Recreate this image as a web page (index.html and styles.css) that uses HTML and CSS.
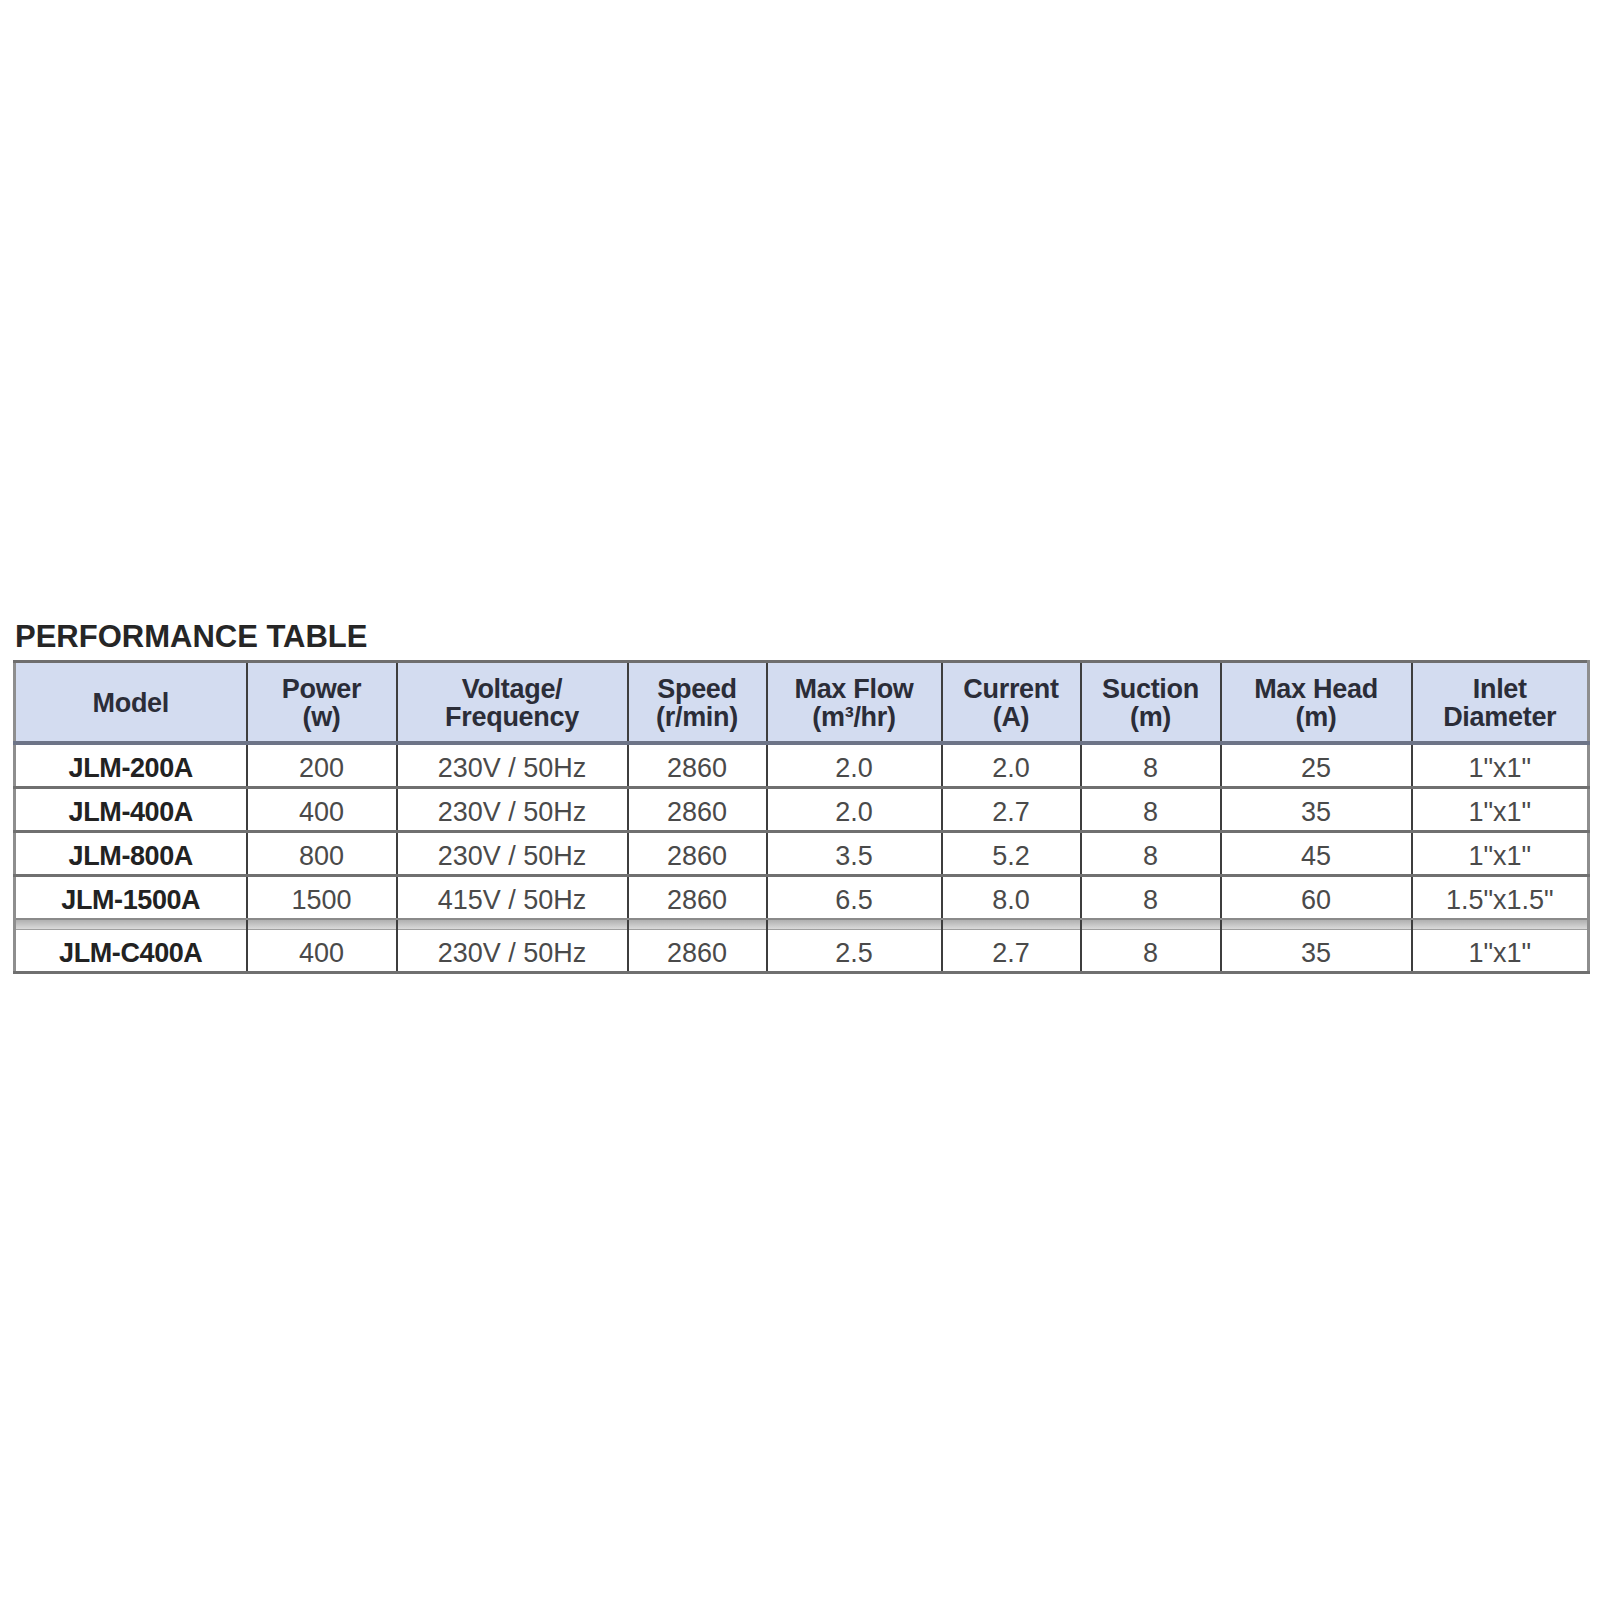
FILE: index.html
```html
<!DOCTYPE html>
<html lang="en">
<head>
<meta charset="utf-8">
<title>Performance Table</title>
<link rel="stylesheet" href="styles.css">
</head>
<body>
<main class="page">
  <h2 class="title">PERFORMANCE TABLE</h2>
  <table class="perf">
    <colgroup>
      <col class="c-model"><col class="c-power"><col class="c-volt"><col class="c-speed"><col class="c-flow"><col class="c-current"><col class="c-suction"><col class="c-head"><col class="c-inlet">
    </colgroup>
    <thead>
      <tr>
        <th>Model</th>
        <th>Power<br>(w)</th>
        <th>Voltage/<br>Frequency</th>
        <th>Speed<br>(r/min)</th>
        <th>Max Flow<br>(m³/hr)</th>
        <th>Current<br>(A)</th>
        <th>Suction<br>(m)</th>
        <th>Max Head<br>(m)</th>
        <th>Inlet<br>Diameter</th>
      </tr>
    </thead>
    <tbody>
      <tr>
        <td class="model">JLM-200A</td><td>200</td><td>230V / 50Hz</td><td>2860</td><td>2.0</td><td>2.0</td><td>8</td><td>25</td><td>1"x1"</td>
      </tr>
      <tr>
        <td class="model">JLM-400A</td><td>400</td><td>230V / 50Hz</td><td>2860</td><td>2.0</td><td>2.7</td><td>8</td><td>35</td><td>1"x1"</td>
      </tr>
      <tr>
        <td class="model">JLM-800A</td><td>800</td><td>230V / 50Hz</td><td>2860</td><td>3.5</td><td>5.2</td><td>8</td><td>45</td><td>1"x1"</td>
      </tr>
      <tr class="before-gap">
        <td class="model">JLM-1500A</td><td>1500</td><td>415V / 50Hz</td><td>2860</td><td>6.5</td><td>8.0</td><td>8</td><td>60</td><td>1.5"x1.5"</td>
      </tr>
      <tr class="gap">
        <td></td><td></td><td></td><td></td><td></td><td></td><td></td><td></td><td></td>
      </tr>
      <tr class="last">
        <td class="model">JLM-C400A</td><td>400</td><td>230V / 50Hz</td><td>2860</td><td>2.5</td><td>2.7</td><td>8</td><td>35</td><td>1"x1"</td>
      </tr>
    </tbody>
  </table>
</main>
</body>
</html>
```

FILE: styles.css
```css
html, body {
  margin: 0;
  padding: 0;
  background: #ffffff;
}

body {
  font-family: "Liberation Sans", Arial, sans-serif;
  color: #333333;
}

.page {
  padding: 622px 0 0 13px;
}

.title {
  margin: 0 0 8px 2px;
  font-size: 31px;
  line-height: 30px;
  font-weight: bold;
  color: #262626;
}

.perf {
  border-collapse: collapse;
  table-layout: fixed;
  width: 1574px;
  border: 3px solid #8e8e8e;
  border-top-color: #6e6e6e;
}

.c-model { width: 232px; }
.c-power { width: 150px; }
.c-volt { width: 231px; }
.c-speed { width: 139px; }
.c-flow { width: 175px; }
.c-current { width: 139px; }
.c-suction { width: 140px; }
.c-head { width: 191px; }
.c-inlet { width: 177px; }

.perf th,
.perf td {
  border-left: 2px solid #3e3e3e;
  border-right: 2px solid #3e3e3e;
  text-align: center;
  padding: 0;
}

.perf th {
  height: 76px;
  background: #d3dcf0;
  font-size: 27px;
  line-height: 28px;
  font-weight: bold;
  color: #2b2d38;
  letter-spacing: -0.3px;
  border-bottom: 4px solid #6d7487;
  padding-top: 2px;
}

.perf td {
  height: 37px;
  font-size: 27px;
  line-height: 30px;
  color: #4a4a4a;
  border-bottom: 3px solid #707070;
  padding-top: 4px;
}

.perf td.model {
  font-weight: bold;
  color: #222222;
  letter-spacing: -0.4px;
}

.perf tr.before-gap td {
  border-bottom: 2px solid #8a8a8a;
}

.perf tr.gap td {
  height: 9px;
  padding: 0;
  background: linear-gradient(#b0b0b0, #dadada);
  border-bottom: 1px solid #a0a0a0;
}

.perf tr.last td {
  height: 37px;
}
```
